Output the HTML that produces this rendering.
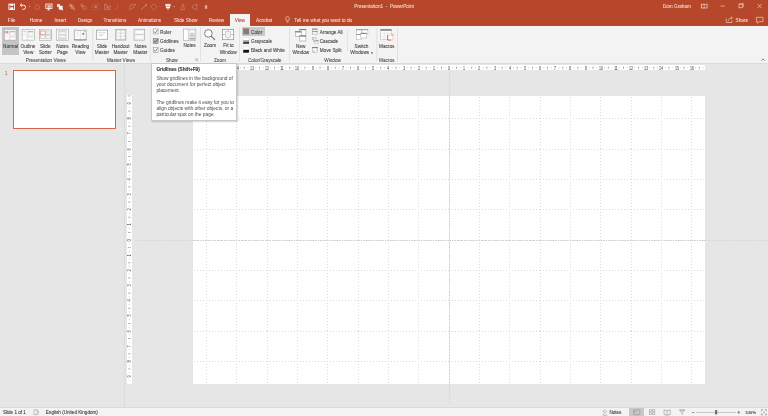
<!DOCTYPE html><html><head><meta charset="utf-8"><style>
html,body{margin:0;padding:0;width:768px;height:416px;overflow:hidden;background:#E6E6E6;font-family:"Liberation Sans",sans-serif}
.t{position:absolute;white-space:nowrap;line-height:1.16;-webkit-text-stroke-width:0.1px}
#w{position:absolute;left:0;top:0;width:768px;height:416px;will-change:transform;overflow:hidden}
.r{position:absolute}
svg{position:absolute;overflow:visible}
</style></head><body><div id="w"><div class="r" style="left:0px;top:0px;width:768px;height:25.6px;background:#B7472A;"></div><div class="r" style="left:229.8px;top:14px;width:20.7px;height:12px;background:#F3F3F3;"></div><div class="r" style="left:0px;top:25.6px;width:768px;height:37.4px;background:#F3F3F3;"></div><div class="r" style="left:0px;top:62.6px;width:768px;height:0.8px;background:#DCDCDC;"></div><div class="r" style="left:0px;top:407.5px;width:768px;height:8.5px;background:#F3F3F3;"></div><div class="r" style="left:0px;top:407px;width:768px;height:0.6px;background:#DADADA;"></div><div class="r" style="left:123.6px;top:63.4px;width:1.6px;height:344px;background:#DCDCDC;"></div><div class="t" style="left:354.2px;top:3.97px;font-size:4.7px;color:#F5DDD6;font-weight:normal;-webkit-text-stroke-width:0.05px">Presentation1&nbsp;&nbsp;-&nbsp;&nbsp;PowerPoint</div><div class="t" style="left:662.8px;top:4.17px;font-size:4.7px;color:#F5DDD6;font-weight:normal;-webkit-text-stroke-width:0.05px">Dom Graham</div><div class="t" style="left:7.8px;top:17.97px;font-size:4.7px;color:#F5DDD6;font-weight:normal;-webkit-text-stroke-width:0.05px">File</div><div class="t" style="left:29.8px;top:17.97px;font-size:4.7px;color:#F5DDD6;font-weight:normal;-webkit-text-stroke-width:0.05px">Home</div><div class="t" style="left:54.4px;top:17.97px;font-size:4.7px;color:#F5DDD6;font-weight:normal;-webkit-text-stroke-width:0.05px">Insert</div><div class="t" style="left:77.8px;top:17.97px;font-size:4.7px;color:#F5DDD6;font-weight:normal;-webkit-text-stroke-width:0.05px">Design</div><div class="t" style="left:103.5px;top:17.97px;font-size:4.7px;color:#F5DDD6;font-weight:normal;-webkit-text-stroke-width:0.05px">Transitions</div><div class="t" style="left:138px;top:17.97px;font-size:4.7px;color:#F5DDD6;font-weight:normal;-webkit-text-stroke-width:0.05px">Animations</div><div class="t" style="left:174px;top:17.97px;font-size:4.7px;color:#F5DDD6;font-weight:normal;-webkit-text-stroke-width:0.05px">Slide Show</div><div class="t" style="left:208.8px;top:17.97px;font-size:4.7px;color:#F5DDD6;font-weight:normal;-webkit-text-stroke-width:0.05px">Review</div><div class="t" style="left:256px;top:17.97px;font-size:4.7px;color:#F5DDD6;font-weight:normal;-webkit-text-stroke-width:0.05px">Acrobat</div><div class="t" style="left:294.3px;top:17.97px;font-size:4.7px;color:#F5DDD6;font-weight:normal;-webkit-text-stroke-width:0.05px">Tell me what you want to do</div><div class="t" style="left:735.5px;top:17.97px;font-size:4.7px;color:#F5DDD6;font-weight:normal;-webkit-text-stroke-width:0.05px">Share</div><div class="t" style="left:234.8px;top:17.97px;font-size:4.7px;color:#B7472A;font-weight:normal;-webkit-text-stroke-width:0.1px">View</div><div class="r" style="left:2px;top:27.4px;width:17.4px;height:27.3px;background:#C5C5C5;"></div><div class="r" style="left:242px;top:27.4px;width:22.7px;height:8.4px;background:#C9C9C9;"></div><div class="t" style="left:-39.4px;width:100px;text-align:center;top:43.97px;font-size:4.7px;color:#484848;">Normal</div><div class="t" style="left:-22px;width:100px;text-align:center;top:43.97px;font-size:4.7px;color:#484848;">Outline</div><div class="t" style="left:-21.7px;width:100px;text-align:center;top:50.17px;font-size:4.7px;color:#484848;">View</div><div class="t" style="left:-4.700000000000003px;width:100px;text-align:center;top:43.97px;font-size:4.7px;color:#484848;">Slide</div><div class="t" style="left:-4.700000000000003px;width:100px;text-align:center;top:50.17px;font-size:4.7px;color:#484848;">Sorter</div><div class="t" style="left:12.399999999999999px;width:100px;text-align:center;top:43.97px;font-size:4.7px;color:#484848;">Notes</div><div class="t" style="left:12.399999999999999px;width:100px;text-align:center;top:50.17px;font-size:4.7px;color:#484848;">Page</div><div class="t" style="left:30.400000000000006px;width:100px;text-align:center;top:43.97px;font-size:4.7px;color:#484848;">Reading</div><div class="t" style="left:30.400000000000006px;width:100px;text-align:center;top:50.17px;font-size:4.7px;color:#484848;">View</div><div class="t" style="left:52px;width:100px;text-align:center;top:43.97px;font-size:4.7px;color:#484848;">Slide</div><div class="t" style="left:52px;width:100px;text-align:center;top:50.17px;font-size:4.7px;color:#484848;">Master</div><div class="t" style="left:70.6px;width:100px;text-align:center;top:43.97px;font-size:4.7px;color:#484848;">Handout</div><div class="t" style="left:70.6px;width:100px;text-align:center;top:50.17px;font-size:4.7px;color:#484848;">Master</div><div class="t" style="left:90.5px;width:100px;text-align:center;top:43.97px;font-size:4.7px;color:#484848;">Notes</div><div class="t" style="left:90.5px;width:100px;text-align:center;top:50.17px;font-size:4.7px;color:#484848;">Master</div><div class="t" style="left:139.6px;width:100px;text-align:center;top:42.97px;font-size:4.7px;color:#484848;">Notes</div><div class="t" style="left:160.1px;width:100px;text-align:center;top:42.97px;font-size:4.7px;color:#484848;">Zoom</div><div class="t" style="left:178.5px;width:100px;text-align:center;top:42.97px;font-size:4.7px;color:#484848;">Fit to</div><div class="t" style="left:178.2px;width:100px;text-align:center;top:49.97px;font-size:4.7px;color:#484848;">Window</div><div class="t" style="left:250.8px;width:100px;text-align:center;top:43.97px;font-size:4.7px;color:#484848;">New</div><div class="t" style="left:250.8px;width:100px;text-align:center;top:49.97px;font-size:4.7px;color:#484848;">Window</div><div class="t" style="left:311.5px;width:100px;text-align:center;top:43.57px;font-size:4.7px;color:#484848;">Switch</div><div class="t" style="left:336.7px;width:100px;text-align:center;top:43.57px;font-size:4.7px;color:#484848;">Macros</div><div class="t" style="left:311.8px;width:100px;text-align:center;top:49.97px;font-size:4.7px;color:#484848;">Windows <span style="font-size:3px">▼</span></div><div class="t" style="left:-4.200000000000003px;width:100px;text-align:center;top:57.67px;font-size:4.7px;color:#555;">Presentation Views</div><div class="t" style="left:71px;width:100px;text-align:center;top:57.67px;font-size:4.7px;color:#555;">Master Views</div><div class="t" style="left:121.80000000000001px;width:100px;text-align:center;top:57.67px;font-size:4.7px;color:#555;">Show</div><div class="t" style="left:170px;width:100px;text-align:center;top:57.67px;font-size:4.7px;color:#555;">Zoom</div><div class="t" style="left:214.7px;width:100px;text-align:center;top:57.67px;font-size:4.7px;color:#555;">Color/Grayscale</div><div class="t" style="left:282.6px;width:100px;text-align:center;top:57.67px;font-size:4.7px;color:#555;">Window</div><div class="t" style="left:336.7px;width:100px;text-align:center;top:57.67px;font-size:4.7px;color:#555;">Macros</div><div class="t" style="left:160.1px;top:30.07px;font-size:4.7px;color:#484848;font-weight:normal;">Ruler</div><div class="t" style="left:160.1px;top:39.07px;font-size:4.7px;color:#484848;font-weight:normal;">Gridlines</div><div class="t" style="left:160.1px;top:48.17px;font-size:4.7px;color:#484848;font-weight:normal;">Guides</div><div class="t" style="left:251px;top:30.07px;font-size:4.7px;color:#484848;font-weight:normal;">Color</div><div class="t" style="left:251px;top:39.07px;font-size:4.7px;color:#484848;font-weight:normal;">Grayscale</div><div class="t" style="left:251px;top:48.47px;font-size:4.7px;color:#484848;font-weight:normal;">Black and White</div><div class="t" style="left:319.7px;top:29.97px;font-size:4.7px;color:#484848;font-weight:normal;">Arrange All</div><div class="t" style="left:319.7px;top:39.07px;font-size:4.7px;color:#484848;font-weight:normal;">Cascade</div><div class="t" style="left:319.7px;top:48.47px;font-size:4.7px;color:#484848;font-weight:normal;">Move Split</div><svg width="768" height="416" style="left:0;top:0" viewBox="0 0 768 416"><rect x="92.39999999999999" y="27.5" width="0.8" height="34" fill="#DCDCDC"/><rect x="149.79999999999998" y="27.5" width="0.8" height="34" fill="#DCDCDC"/><rect x="200.0" y="27.5" width="0.8" height="34" fill="#DCDCDC"/><rect x="239.2" y="27.5" width="0.8" height="34" fill="#DCDCDC"/><rect x="289.1" y="27.5" width="0.8" height="34" fill="#DCDCDC"/><rect x="376.5" y="27.5" width="0.8" height="34" fill="#DCDCDC"/><rect x="397.0" y="27.5" width="0.8" height="34" fill="#DCDCDC"/><rect x="347.3" y="29.5" width="0.8" height="22" fill="#DCDCDC"/></svg><div class="t" style="left:4.8px;top:70.96px;font-size:4.9px;color:#D0694E;font-weight:normal;-webkit-text-stroke-width:0.05px">1</div><div class="r" style="left:12.7px;top:69.7px;width:103.3px;height:59.4px;background:#FFFFFF;box-sizing:border-box;border:1.5px solid #D9664A"></div><div class="r" style="left:193px;top:95.6px;width:512px;height:288.2px;background:#FFFFFF;"></div><svg width="768" height="416" style="left:0;top:0" viewBox="0 0 768 416"><path d="M206.5 119V96M206.5 118V149M206.5 149V179M206.5 179V209M206.5 209V240M206.5 240V270M206.5 270V300M206.5 300V331M206.5 331V361M206.5 361V383.8M236.5 119V96M236.5 118V149M236.5 149V179M236.5 179V209M236.5 209V240M236.5 240V270M236.5 270V300M236.5 300V331M236.5 331V361M236.5 361V383.8M267.5 119V96M267.5 118V149M267.5 149V179M267.5 179V209M267.5 209V240M267.5 240V270M267.5 270V300M267.5 300V331M267.5 331V361M267.5 361V383.8M297.5 119V96M297.5 118V149M297.5 149V179M297.5 179V209M297.5 209V240M297.5 240V270M297.5 270V300M297.5 300V331M297.5 331V361M297.5 361V383.8M327.5 119V96M327.5 118V149M327.5 149V179M327.5 179V209M327.5 209V240M327.5 240V270M327.5 270V300M327.5 300V331M327.5 331V361M327.5 361V383.8M358.5 119V96M358.5 118V149M358.5 149V179M358.5 179V209M358.5 209V240M358.5 240V270M358.5 270V300M358.5 300V331M358.5 331V361M358.5 361V383.8M388.5 119V96M388.5 118V149M388.5 149V179M388.5 179V209M388.5 209V240M388.5 240V270M388.5 270V300M388.5 300V331M388.5 331V361M388.5 361V383.8M418.5 119V96M418.5 118V149M418.5 149V179M418.5 179V209M418.5 209V240M418.5 240V270M418.5 270V300M418.5 300V331M418.5 331V361M418.5 361V383.8M449.5 119V96M449.5 118V149M449.5 149V179M449.5 179V209M449.5 209V240M449.5 240V270M449.5 270V300M449.5 300V331M449.5 331V361M449.5 361V383.8M479.5 119V96M479.5 118V149M479.5 149V179M479.5 179V209M479.5 209V240M479.5 240V270M479.5 270V300M479.5 300V331M479.5 331V361M479.5 361V383.8M509.5 119V96M509.5 118V149M509.5 149V179M509.5 179V209M509.5 209V240M509.5 240V270M509.5 270V300M509.5 300V331M509.5 331V361M509.5 361V383.8M540.5 119V96M540.5 118V149M540.5 149V179M540.5 179V209M540.5 209V240M540.5 240V270M540.5 270V300M540.5 300V331M540.5 331V361M540.5 361V383.8M570.5 119V96M570.5 118V149M570.5 149V179M570.5 179V209M570.5 209V240M570.5 240V270M570.5 270V300M570.5 300V331M570.5 331V361M570.5 361V383.8M600.5 119V96M600.5 118V149M600.5 149V179M600.5 179V209M600.5 209V240M600.5 240V270M600.5 270V300M600.5 300V331M600.5 331V361M600.5 361V383.8M631.5 119V96M631.5 118V149M631.5 149V179M631.5 179V209M631.5 209V240M631.5 240V270M631.5 270V300M631.5 300V331M631.5 331V361M631.5 361V383.8M661.5 119V96M661.5 118V149M661.5 149V179M661.5 179V209M661.5 209V240M661.5 240V270M661.5 270V300M661.5 300V331M661.5 331V361M661.5 361V383.8M691.5 119V96M691.5 118V149M691.5 149V179M691.5 179V209M691.5 209V240M691.5 240V270M691.5 270V300M691.5 300V331M691.5 331V361M691.5 361V383.8M207 118.5H193M206 118.5H236M236 118.5H267M267 118.5H297M297 118.5H327M327 118.5H358M358 118.5H388M388 118.5H418M418 118.5H449M449 118.5H479M479 118.5H509M509 118.5H540M540 118.5H570M570 118.5H600M600 118.5H631M631 118.5H661M661 118.5H691M691 118.5H705M207 149.5H193M206 149.5H236M236 149.5H267M267 149.5H297M297 149.5H327M327 149.5H358M358 149.5H388M388 149.5H418M418 149.5H449M449 149.5H479M479 149.5H509M509 149.5H540M540 149.5H570M570 149.5H600M600 149.5H631M631 149.5H661M661 149.5H691M691 149.5H705M207 179.5H193M206 179.5H236M236 179.5H267M267 179.5H297M297 179.5H327M327 179.5H358M358 179.5H388M388 179.5H418M418 179.5H449M449 179.5H479M479 179.5H509M509 179.5H540M540 179.5H570M570 179.5H600M600 179.5H631M631 179.5H661M661 179.5H691M691 179.5H705M207 209.5H193M206 209.5H236M236 209.5H267M267 209.5H297M297 209.5H327M327 209.5H358M358 209.5H388M388 209.5H418M418 209.5H449M449 209.5H479M479 209.5H509M509 209.5H540M540 209.5H570M570 209.5H600M600 209.5H631M631 209.5H661M661 209.5H691M691 209.5H705M207 240.5H193M206 240.5H236M236 240.5H267M267 240.5H297M297 240.5H327M327 240.5H358M358 240.5H388M388 240.5H418M418 240.5H449M449 240.5H479M479 240.5H509M509 240.5H540M540 240.5H570M570 240.5H600M600 240.5H631M631 240.5H661M661 240.5H691M691 240.5H705M207 270.5H193M206 270.5H236M236 270.5H267M267 270.5H297M297 270.5H327M327 270.5H358M358 270.5H388M388 270.5H418M418 270.5H449M449 270.5H479M479 270.5H509M509 270.5H540M540 270.5H570M570 270.5H600M600 270.5H631M631 270.5H661M661 270.5H691M691 270.5H705M207 300.5H193M206 300.5H236M236 300.5H267M267 300.5H297M297 300.5H327M327 300.5H358M358 300.5H388M388 300.5H418M418 300.5H449M449 300.5H479M479 300.5H509M509 300.5H540M540 300.5H570M570 300.5H600M600 300.5H631M631 300.5H661M661 300.5H691M691 300.5H705M207 331.5H193M206 331.5H236M236 331.5H267M267 331.5H297M297 331.5H327M327 331.5H358M358 331.5H388M388 331.5H418M418 331.5H449M449 331.5H479M479 331.5H509M509 331.5H540M540 331.5H570M570 331.5H600M600 331.5H631M631 331.5H661M661 331.5H691M691 331.5H705M207 361.5H193M206 361.5H236M236 361.5H267M267 361.5H297M297 361.5H327M327 361.5H358M358 361.5H388M388 361.5H418M418 361.5H449M449 361.5H479M479 361.5H509M509 361.5H540M540 361.5H570M570 361.5H600M600 361.5H631M631 361.5H661M661 361.5H691M691 361.5H705" stroke="#DCDCDC" stroke-width="1" stroke-dasharray="1 2" fill="none"/><line x1="449.5" y1="72" x2="449.5" y2="95.6" stroke="#D4D4D4" stroke-width="1" stroke-dasharray="1.2 1.2"/><line x1="449.5" y1="95.6" x2="449.5" y2="384" stroke="#C8C8C8" stroke-width="1" stroke-dasharray="1.2 1.2"/><line x1="449.5" y1="384" x2="449.5" y2="405.5" stroke="#D4D4D4" stroke-width="1" stroke-dasharray="1.2 1.2"/><line x1="135" y1="240.5" x2="193" y2="240.5" stroke="#D4D4D4" stroke-width="1" stroke-dasharray="1.2 1.2"/><line x1="193" y1="240.5" x2="705" y2="240.5" stroke="#C8C8C8" stroke-width="1" stroke-dasharray="1.2 1.2"/><line x1="705" y1="240.5" x2="768" y2="240.5" stroke="#D4D4D4" stroke-width="1" stroke-dasharray="1.2 1.2"/></svg><div class="r" style="left:160px;top:65.1px;width:545px;height:5.4px;background:#FFFFFF;"></div><svg width="768" height="416" style="left:0;top:0" viewBox="0 0 768 416"><rect x="164.17" y="67.3" width="0.9" height="0.9" fill="#BDBDBD"/><rect x="167.97" y="66.5" width="0.9" height="2.4" fill="#A5A5A5"/><rect x="171.76" y="67.3" width="0.9" height="0.9" fill="#BDBDBD"/><rect x="179.34" y="67.3" width="0.9" height="0.9" fill="#BDBDBD"/><rect x="183.13" y="66.5" width="0.9" height="2.4" fill="#A5A5A5"/><rect x="186.92" y="67.3" width="0.9" height="0.9" fill="#BDBDBD"/><rect x="194.51" y="67.3" width="0.9" height="0.9" fill="#BDBDBD"/><rect x="198.30" y="66.5" width="0.9" height="2.4" fill="#A5A5A5"/><rect x="202.09" y="67.3" width="0.9" height="0.9" fill="#BDBDBD"/><rect x="209.67" y="67.3" width="0.9" height="0.9" fill="#BDBDBD"/><rect x="213.47" y="66.5" width="0.9" height="2.4" fill="#A5A5A5"/><rect x="217.26" y="67.3" width="0.9" height="0.9" fill="#BDBDBD"/><rect x="224.84" y="67.3" width="0.9" height="0.9" fill="#BDBDBD"/><rect x="228.63" y="66.5" width="0.9" height="2.4" fill="#A5A5A5"/><rect x="232.42" y="67.3" width="0.9" height="0.9" fill="#BDBDBD"/><rect x="240.01" y="67.3" width="0.9" height="0.9" fill="#BDBDBD"/><rect x="243.80" y="66.5" width="0.9" height="2.4" fill="#A5A5A5"/><rect x="247.59" y="67.3" width="0.9" height="0.9" fill="#BDBDBD"/><rect x="255.17" y="67.3" width="0.9" height="0.9" fill="#BDBDBD"/><rect x="258.97" y="66.5" width="0.9" height="2.4" fill="#A5A5A5"/><rect x="262.76" y="67.3" width="0.9" height="0.9" fill="#BDBDBD"/><rect x="270.34" y="67.3" width="0.9" height="0.9" fill="#BDBDBD"/><rect x="274.13" y="66.5" width="0.9" height="2.4" fill="#A5A5A5"/><rect x="277.92" y="67.3" width="0.9" height="0.9" fill="#BDBDBD"/><rect x="285.51" y="67.3" width="0.9" height="0.9" fill="#BDBDBD"/><rect x="289.30" y="66.5" width="0.9" height="2.4" fill="#A5A5A5"/><rect x="293.09" y="67.3" width="0.9" height="0.9" fill="#BDBDBD"/><rect x="300.67" y="67.3" width="0.9" height="0.9" fill="#BDBDBD"/><rect x="304.47" y="66.5" width="0.9" height="2.4" fill="#A5A5A5"/><rect x="308.26" y="67.3" width="0.9" height="0.9" fill="#BDBDBD"/><rect x="315.84" y="67.3" width="0.9" height="0.9" fill="#BDBDBD"/><rect x="319.63" y="66.5" width="0.9" height="2.4" fill="#A5A5A5"/><rect x="323.42" y="67.3" width="0.9" height="0.9" fill="#BDBDBD"/><rect x="331.01" y="67.3" width="0.9" height="0.9" fill="#BDBDBD"/><rect x="334.80" y="66.5" width="0.9" height="2.4" fill="#A5A5A5"/><rect x="338.59" y="67.3" width="0.9" height="0.9" fill="#BDBDBD"/><rect x="346.17" y="67.3" width="0.9" height="0.9" fill="#BDBDBD"/><rect x="349.97" y="66.5" width="0.9" height="2.4" fill="#A5A5A5"/><rect x="353.76" y="67.3" width="0.9" height="0.9" fill="#BDBDBD"/><rect x="361.34" y="67.3" width="0.9" height="0.9" fill="#BDBDBD"/><rect x="365.13" y="66.5" width="0.9" height="2.4" fill="#A5A5A5"/><rect x="368.92" y="67.3" width="0.9" height="0.9" fill="#BDBDBD"/><rect x="376.51" y="67.3" width="0.9" height="0.9" fill="#BDBDBD"/><rect x="380.30" y="66.5" width="0.9" height="2.4" fill="#A5A5A5"/><rect x="384.09" y="67.3" width="0.9" height="0.9" fill="#BDBDBD"/><rect x="391.67" y="67.3" width="0.9" height="0.9" fill="#BDBDBD"/><rect x="395.47" y="66.5" width="0.9" height="2.4" fill="#A5A5A5"/><rect x="399.26" y="67.3" width="0.9" height="0.9" fill="#BDBDBD"/><rect x="406.84" y="67.3" width="0.9" height="0.9" fill="#BDBDBD"/><rect x="410.63" y="66.5" width="0.9" height="2.4" fill="#A5A5A5"/><rect x="414.42" y="67.3" width="0.9" height="0.9" fill="#BDBDBD"/><rect x="422.01" y="67.3" width="0.9" height="0.9" fill="#BDBDBD"/><rect x="425.80" y="66.5" width="0.9" height="2.4" fill="#A5A5A5"/><rect x="429.59" y="67.3" width="0.9" height="0.9" fill="#BDBDBD"/><rect x="437.17" y="67.3" width="0.9" height="0.9" fill="#BDBDBD"/><rect x="440.97" y="66.5" width="0.9" height="2.4" fill="#A5A5A5"/><rect x="444.76" y="67.3" width="0.9" height="0.9" fill="#BDBDBD"/><rect x="452.34" y="67.3" width="0.9" height="0.9" fill="#BDBDBD"/><rect x="456.13" y="66.5" width="0.9" height="2.4" fill="#A5A5A5"/><rect x="459.93" y="67.3" width="0.9" height="0.9" fill="#BDBDBD"/><rect x="467.51" y="67.3" width="0.9" height="0.9" fill="#BDBDBD"/><rect x="471.30" y="66.5" width="0.9" height="2.4" fill="#A5A5A5"/><rect x="475.09" y="67.3" width="0.9" height="0.9" fill="#BDBDBD"/><rect x="482.68" y="67.3" width="0.9" height="0.9" fill="#BDBDBD"/><rect x="486.47" y="66.5" width="0.9" height="2.4" fill="#A5A5A5"/><rect x="490.26" y="67.3" width="0.9" height="0.9" fill="#BDBDBD"/><rect x="497.84" y="67.3" width="0.9" height="0.9" fill="#BDBDBD"/><rect x="501.63" y="66.5" width="0.9" height="2.4" fill="#A5A5A5"/><rect x="505.43" y="67.3" width="0.9" height="0.9" fill="#BDBDBD"/><rect x="513.01" y="67.3" width="0.9" height="0.9" fill="#BDBDBD"/><rect x="516.80" y="66.5" width="0.9" height="2.4" fill="#A5A5A5"/><rect x="520.59" y="67.3" width="0.9" height="0.9" fill="#BDBDBD"/><rect x="528.18" y="67.3" width="0.9" height="0.9" fill="#BDBDBD"/><rect x="531.97" y="66.5" width="0.9" height="2.4" fill="#A5A5A5"/><rect x="535.76" y="67.3" width="0.9" height="0.9" fill="#BDBDBD"/><rect x="543.34" y="67.3" width="0.9" height="0.9" fill="#BDBDBD"/><rect x="547.13" y="66.5" width="0.9" height="2.4" fill="#A5A5A5"/><rect x="550.93" y="67.3" width="0.9" height="0.9" fill="#BDBDBD"/><rect x="558.51" y="67.3" width="0.9" height="0.9" fill="#BDBDBD"/><rect x="562.30" y="66.5" width="0.9" height="2.4" fill="#A5A5A5"/><rect x="566.09" y="67.3" width="0.9" height="0.9" fill="#BDBDBD"/><rect x="573.68" y="67.3" width="0.9" height="0.9" fill="#BDBDBD"/><rect x="577.47" y="66.5" width="0.9" height="2.4" fill="#A5A5A5"/><rect x="581.26" y="67.3" width="0.9" height="0.9" fill="#BDBDBD"/><rect x="588.84" y="67.3" width="0.9" height="0.9" fill="#BDBDBD"/><rect x="592.63" y="66.5" width="0.9" height="2.4" fill="#A5A5A5"/><rect x="596.43" y="67.3" width="0.9" height="0.9" fill="#BDBDBD"/><rect x="604.01" y="67.3" width="0.9" height="0.9" fill="#BDBDBD"/><rect x="607.80" y="66.5" width="0.9" height="2.4" fill="#A5A5A5"/><rect x="611.59" y="67.3" width="0.9" height="0.9" fill="#BDBDBD"/><rect x="619.18" y="67.3" width="0.9" height="0.9" fill="#BDBDBD"/><rect x="622.97" y="66.5" width="0.9" height="2.4" fill="#A5A5A5"/><rect x="626.76" y="67.3" width="0.9" height="0.9" fill="#BDBDBD"/><rect x="634.34" y="67.3" width="0.9" height="0.9" fill="#BDBDBD"/><rect x="638.13" y="66.5" width="0.9" height="2.4" fill="#A5A5A5"/><rect x="641.93" y="67.3" width="0.9" height="0.9" fill="#BDBDBD"/><rect x="649.51" y="67.3" width="0.9" height="0.9" fill="#BDBDBD"/><rect x="653.30" y="66.5" width="0.9" height="2.4" fill="#A5A5A5"/><rect x="657.09" y="67.3" width="0.9" height="0.9" fill="#BDBDBD"/><rect x="664.68" y="67.3" width="0.9" height="0.9" fill="#BDBDBD"/><rect x="668.47" y="66.5" width="0.9" height="2.4" fill="#A5A5A5"/><rect x="672.26" y="67.3" width="0.9" height="0.9" fill="#BDBDBD"/><rect x="679.84" y="67.3" width="0.9" height="0.9" fill="#BDBDBD"/><rect x="683.63" y="66.5" width="0.9" height="2.4" fill="#A5A5A5"/><rect x="687.43" y="67.3" width="0.9" height="0.9" fill="#BDBDBD"/><rect x="695.01" y="67.3" width="0.9" height="0.9" fill="#BDBDBD"/><rect x="698.80" y="66.5" width="0.9" height="2.4" fill="#A5A5A5"/><rect x="702.59" y="67.3" width="0.9" height="0.9" fill="#BDBDBD"/></svg><div class="t" style="left:140.83px;top:65.7px;width:40px;height:5px;line-height:5px;text-align:center;font-size:5px;color:#555;letter-spacing:-0.1px;-webkit-text-stroke-width:0.05px;transform:scaleX(0.72)">19</div><div class="t" style="left:156.00px;top:65.7px;width:40px;height:5px;line-height:5px;text-align:center;font-size:5px;color:#555;letter-spacing:-0.1px;-webkit-text-stroke-width:0.05px;transform:scaleX(0.72)">18</div><div class="t" style="left:171.17px;top:65.7px;width:40px;height:5px;line-height:5px;text-align:center;font-size:5px;color:#555;letter-spacing:-0.1px;-webkit-text-stroke-width:0.05px;transform:scaleX(0.72)">17</div><div class="t" style="left:186.33px;top:65.7px;width:40px;height:5px;line-height:5px;text-align:center;font-size:5px;color:#555;letter-spacing:-0.1px;-webkit-text-stroke-width:0.05px;transform:scaleX(0.72)">16</div><div class="t" style="left:201.50px;top:65.7px;width:40px;height:5px;line-height:5px;text-align:center;font-size:5px;color:#555;letter-spacing:-0.1px;-webkit-text-stroke-width:0.05px;transform:scaleX(0.72)">15</div><div class="t" style="left:216.67px;top:65.7px;width:40px;height:5px;line-height:5px;text-align:center;font-size:5px;color:#555;letter-spacing:-0.1px;-webkit-text-stroke-width:0.05px;transform:scaleX(0.72)">14</div><div class="t" style="left:231.83px;top:65.7px;width:40px;height:5px;line-height:5px;text-align:center;font-size:5px;color:#555;letter-spacing:-0.1px;-webkit-text-stroke-width:0.05px;transform:scaleX(0.72)">13</div><div class="t" style="left:247.00px;top:65.7px;width:40px;height:5px;line-height:5px;text-align:center;font-size:5px;color:#555;letter-spacing:-0.1px;-webkit-text-stroke-width:0.05px;transform:scaleX(0.72)">12</div><div class="t" style="left:262.17px;top:65.7px;width:40px;height:5px;line-height:5px;text-align:center;font-size:5px;color:#555;letter-spacing:-0.1px;-webkit-text-stroke-width:0.05px;transform:scaleX(0.72)">11</div><div class="t" style="left:277.33px;top:65.7px;width:40px;height:5px;line-height:5px;text-align:center;font-size:5px;color:#555;letter-spacing:-0.1px;-webkit-text-stroke-width:0.05px;transform:scaleX(0.72)">10</div><div class="t" style="left:292.50px;top:65.7px;width:40px;height:5px;line-height:5px;text-align:center;font-size:5px;color:#555;letter-spacing:-0.1px;-webkit-text-stroke-width:0.05px;transform:scaleX(0.72)">9</div><div class="t" style="left:307.67px;top:65.7px;width:40px;height:5px;line-height:5px;text-align:center;font-size:5px;color:#555;letter-spacing:-0.1px;-webkit-text-stroke-width:0.05px;transform:scaleX(0.72)">8</div><div class="t" style="left:322.83px;top:65.7px;width:40px;height:5px;line-height:5px;text-align:center;font-size:5px;color:#555;letter-spacing:-0.1px;-webkit-text-stroke-width:0.05px;transform:scaleX(0.72)">7</div><div class="t" style="left:338.00px;top:65.7px;width:40px;height:5px;line-height:5px;text-align:center;font-size:5px;color:#555;letter-spacing:-0.1px;-webkit-text-stroke-width:0.05px;transform:scaleX(0.72)">6</div><div class="t" style="left:353.17px;top:65.7px;width:40px;height:5px;line-height:5px;text-align:center;font-size:5px;color:#555;letter-spacing:-0.1px;-webkit-text-stroke-width:0.05px;transform:scaleX(0.72)">5</div><div class="t" style="left:368.33px;top:65.7px;width:40px;height:5px;line-height:5px;text-align:center;font-size:5px;color:#555;letter-spacing:-0.1px;-webkit-text-stroke-width:0.05px;transform:scaleX(0.72)">4</div><div class="t" style="left:383.50px;top:65.7px;width:40px;height:5px;line-height:5px;text-align:center;font-size:5px;color:#555;letter-spacing:-0.1px;-webkit-text-stroke-width:0.05px;transform:scaleX(0.72)">3</div><div class="t" style="left:398.67px;top:65.7px;width:40px;height:5px;line-height:5px;text-align:center;font-size:5px;color:#555;letter-spacing:-0.1px;-webkit-text-stroke-width:0.05px;transform:scaleX(0.72)">2</div><div class="t" style="left:413.83px;top:65.7px;width:40px;height:5px;line-height:5px;text-align:center;font-size:5px;color:#555;letter-spacing:-0.1px;-webkit-text-stroke-width:0.05px;transform:scaleX(0.72)">1</div><div class="t" style="left:429.00px;top:65.7px;width:40px;height:5px;line-height:5px;text-align:center;font-size:5px;color:#555;letter-spacing:-0.1px;-webkit-text-stroke-width:0.05px;transform:scaleX(0.72)">0</div><div class="t" style="left:444.17px;top:65.7px;width:40px;height:5px;line-height:5px;text-align:center;font-size:5px;color:#555;letter-spacing:-0.1px;-webkit-text-stroke-width:0.05px;transform:scaleX(0.72)">1</div><div class="t" style="left:459.33px;top:65.7px;width:40px;height:5px;line-height:5px;text-align:center;font-size:5px;color:#555;letter-spacing:-0.1px;-webkit-text-stroke-width:0.05px;transform:scaleX(0.72)">2</div><div class="t" style="left:474.50px;top:65.7px;width:40px;height:5px;line-height:5px;text-align:center;font-size:5px;color:#555;letter-spacing:-0.1px;-webkit-text-stroke-width:0.05px;transform:scaleX(0.72)">3</div><div class="t" style="left:489.67px;top:65.7px;width:40px;height:5px;line-height:5px;text-align:center;font-size:5px;color:#555;letter-spacing:-0.1px;-webkit-text-stroke-width:0.05px;transform:scaleX(0.72)">4</div><div class="t" style="left:504.83px;top:65.7px;width:40px;height:5px;line-height:5px;text-align:center;font-size:5px;color:#555;letter-spacing:-0.1px;-webkit-text-stroke-width:0.05px;transform:scaleX(0.72)">5</div><div class="t" style="left:520.00px;top:65.7px;width:40px;height:5px;line-height:5px;text-align:center;font-size:5px;color:#555;letter-spacing:-0.1px;-webkit-text-stroke-width:0.05px;transform:scaleX(0.72)">6</div><div class="t" style="left:535.17px;top:65.7px;width:40px;height:5px;line-height:5px;text-align:center;font-size:5px;color:#555;letter-spacing:-0.1px;-webkit-text-stroke-width:0.05px;transform:scaleX(0.72)">7</div><div class="t" style="left:550.33px;top:65.7px;width:40px;height:5px;line-height:5px;text-align:center;font-size:5px;color:#555;letter-spacing:-0.1px;-webkit-text-stroke-width:0.05px;transform:scaleX(0.72)">8</div><div class="t" style="left:565.50px;top:65.7px;width:40px;height:5px;line-height:5px;text-align:center;font-size:5px;color:#555;letter-spacing:-0.1px;-webkit-text-stroke-width:0.05px;transform:scaleX(0.72)">9</div><div class="t" style="left:580.67px;top:65.7px;width:40px;height:5px;line-height:5px;text-align:center;font-size:5px;color:#555;letter-spacing:-0.1px;-webkit-text-stroke-width:0.05px;transform:scaleX(0.72)">10</div><div class="t" style="left:595.83px;top:65.7px;width:40px;height:5px;line-height:5px;text-align:center;font-size:5px;color:#555;letter-spacing:-0.1px;-webkit-text-stroke-width:0.05px;transform:scaleX(0.72)">11</div><div class="t" style="left:611.00px;top:65.7px;width:40px;height:5px;line-height:5px;text-align:center;font-size:5px;color:#555;letter-spacing:-0.1px;-webkit-text-stroke-width:0.05px;transform:scaleX(0.72)">12</div><div class="t" style="left:626.17px;top:65.7px;width:40px;height:5px;line-height:5px;text-align:center;font-size:5px;color:#555;letter-spacing:-0.1px;-webkit-text-stroke-width:0.05px;transform:scaleX(0.72)">13</div><div class="t" style="left:641.33px;top:65.7px;width:40px;height:5px;line-height:5px;text-align:center;font-size:5px;color:#555;letter-spacing:-0.1px;-webkit-text-stroke-width:0.05px;transform:scaleX(0.72)">14</div><div class="t" style="left:656.50px;top:65.7px;width:40px;height:5px;line-height:5px;text-align:center;font-size:5px;color:#555;letter-spacing:-0.1px;-webkit-text-stroke-width:0.05px;transform:scaleX(0.72)">15</div><div class="t" style="left:671.67px;top:65.7px;width:40px;height:5px;line-height:5px;text-align:center;font-size:5px;color:#555;letter-spacing:-0.1px;-webkit-text-stroke-width:0.05px;transform:scaleX(0.72)">16</div><div class="r" style="left:126.8px;top:95.4px;width:5.4px;height:288.6px;background:#FFFFFF;"></div><svg width="768" height="416" style="left:0;top:0" viewBox="0 0 768 416"><rect x="128.1" y="95.47" width="2.4" height="0.9" fill="#A5A5A5"/><rect x="128.9" y="99.26" width="0.9" height="0.9" fill="#BDBDBD"/><rect x="128.9" y="106.84" width="0.9" height="0.9" fill="#BDBDBD"/><rect x="128.1" y="110.63" width="2.4" height="0.9" fill="#A5A5A5"/><rect x="128.9" y="114.42" width="0.9" height="0.9" fill="#BDBDBD"/><rect x="128.9" y="122.01" width="0.9" height="0.9" fill="#BDBDBD"/><rect x="128.1" y="125.80" width="2.4" height="0.9" fill="#A5A5A5"/><rect x="128.9" y="129.59" width="0.9" height="0.9" fill="#BDBDBD"/><rect x="128.9" y="137.17" width="0.9" height="0.9" fill="#BDBDBD"/><rect x="128.1" y="140.97" width="2.4" height="0.9" fill="#A5A5A5"/><rect x="128.9" y="144.76" width="0.9" height="0.9" fill="#BDBDBD"/><rect x="128.9" y="152.34" width="0.9" height="0.9" fill="#BDBDBD"/><rect x="128.1" y="156.13" width="2.4" height="0.9" fill="#A5A5A5"/><rect x="128.9" y="159.92" width="0.9" height="0.9" fill="#BDBDBD"/><rect x="128.9" y="167.51" width="0.9" height="0.9" fill="#BDBDBD"/><rect x="128.1" y="171.30" width="2.4" height="0.9" fill="#A5A5A5"/><rect x="128.9" y="175.09" width="0.9" height="0.9" fill="#BDBDBD"/><rect x="128.9" y="182.67" width="0.9" height="0.9" fill="#BDBDBD"/><rect x="128.1" y="186.47" width="2.4" height="0.9" fill="#A5A5A5"/><rect x="128.9" y="190.26" width="0.9" height="0.9" fill="#BDBDBD"/><rect x="128.9" y="197.84" width="0.9" height="0.9" fill="#BDBDBD"/><rect x="128.1" y="201.63" width="2.4" height="0.9" fill="#A5A5A5"/><rect x="128.9" y="205.42" width="0.9" height="0.9" fill="#BDBDBD"/><rect x="128.9" y="213.01" width="0.9" height="0.9" fill="#BDBDBD"/><rect x="128.1" y="216.80" width="2.4" height="0.9" fill="#A5A5A5"/><rect x="128.9" y="220.59" width="0.9" height="0.9" fill="#BDBDBD"/><rect x="128.9" y="228.17" width="0.9" height="0.9" fill="#BDBDBD"/><rect x="128.1" y="231.97" width="2.4" height="0.9" fill="#A5A5A5"/><rect x="128.9" y="235.76" width="0.9" height="0.9" fill="#BDBDBD"/><rect x="128.9" y="243.34" width="0.9" height="0.9" fill="#BDBDBD"/><rect x="128.1" y="247.13" width="2.4" height="0.9" fill="#A5A5A5"/><rect x="128.9" y="250.93" width="0.9" height="0.9" fill="#BDBDBD"/><rect x="128.9" y="258.51" width="0.9" height="0.9" fill="#BDBDBD"/><rect x="128.1" y="262.30" width="2.4" height="0.9" fill="#A5A5A5"/><rect x="128.9" y="266.09" width="0.9" height="0.9" fill="#BDBDBD"/><rect x="128.9" y="273.68" width="0.9" height="0.9" fill="#BDBDBD"/><rect x="128.1" y="277.47" width="2.4" height="0.9" fill="#A5A5A5"/><rect x="128.9" y="281.26" width="0.9" height="0.9" fill="#BDBDBD"/><rect x="128.9" y="288.84" width="0.9" height="0.9" fill="#BDBDBD"/><rect x="128.1" y="292.63" width="2.4" height="0.9" fill="#A5A5A5"/><rect x="128.9" y="296.43" width="0.9" height="0.9" fill="#BDBDBD"/><rect x="128.9" y="304.01" width="0.9" height="0.9" fill="#BDBDBD"/><rect x="128.1" y="307.80" width="2.4" height="0.9" fill="#A5A5A5"/><rect x="128.9" y="311.59" width="0.9" height="0.9" fill="#BDBDBD"/><rect x="128.9" y="319.18" width="0.9" height="0.9" fill="#BDBDBD"/><rect x="128.1" y="322.97" width="2.4" height="0.9" fill="#A5A5A5"/><rect x="128.9" y="326.76" width="0.9" height="0.9" fill="#BDBDBD"/><rect x="128.9" y="334.34" width="0.9" height="0.9" fill="#BDBDBD"/><rect x="128.1" y="338.13" width="2.4" height="0.9" fill="#A5A5A5"/><rect x="128.9" y="341.93" width="0.9" height="0.9" fill="#BDBDBD"/><rect x="128.9" y="349.51" width="0.9" height="0.9" fill="#BDBDBD"/><rect x="128.1" y="353.30" width="2.4" height="0.9" fill="#A5A5A5"/><rect x="128.9" y="357.09" width="0.9" height="0.9" fill="#BDBDBD"/><rect x="128.9" y="364.68" width="0.9" height="0.9" fill="#BDBDBD"/><rect x="128.1" y="368.47" width="2.4" height="0.9" fill="#A5A5A5"/><rect x="128.9" y="372.26" width="0.9" height="0.9" fill="#BDBDBD"/><rect x="128.9" y="379.84" width="0.9" height="0.9" fill="#BDBDBD"/></svg><div class="t" style="left:109.4px;top:101.00px;width:40px;height:5px;line-height:5px;text-align:center;font-size:4.8px;color:#5A5A5A;letter-spacing:-0.1px;-webkit-text-stroke-width:0.05px;transform:rotate(-90deg) scaleX(0.85)">9</div><div class="t" style="left:109.4px;top:116.17px;width:40px;height:5px;line-height:5px;text-align:center;font-size:4.8px;color:#5A5A5A;letter-spacing:-0.1px;-webkit-text-stroke-width:0.05px;transform:rotate(-90deg) scaleX(0.85)">8</div><div class="t" style="left:109.4px;top:131.33px;width:40px;height:5px;line-height:5px;text-align:center;font-size:4.8px;color:#5A5A5A;letter-spacing:-0.1px;-webkit-text-stroke-width:0.05px;transform:rotate(-90deg) scaleX(0.85)">7</div><div class="t" style="left:109.4px;top:146.50px;width:40px;height:5px;line-height:5px;text-align:center;font-size:4.8px;color:#5A5A5A;letter-spacing:-0.1px;-webkit-text-stroke-width:0.05px;transform:rotate(-90deg) scaleX(0.85)">6</div><div class="t" style="left:109.4px;top:161.67px;width:40px;height:5px;line-height:5px;text-align:center;font-size:4.8px;color:#5A5A5A;letter-spacing:-0.1px;-webkit-text-stroke-width:0.05px;transform:rotate(-90deg) scaleX(0.85)">5</div><div class="t" style="left:109.4px;top:176.83px;width:40px;height:5px;line-height:5px;text-align:center;font-size:4.8px;color:#5A5A5A;letter-spacing:-0.1px;-webkit-text-stroke-width:0.05px;transform:rotate(-90deg) scaleX(0.85)">4</div><div class="t" style="left:109.4px;top:192.00px;width:40px;height:5px;line-height:5px;text-align:center;font-size:4.8px;color:#5A5A5A;letter-spacing:-0.1px;-webkit-text-stroke-width:0.05px;transform:rotate(-90deg) scaleX(0.85)">3</div><div class="t" style="left:109.4px;top:207.17px;width:40px;height:5px;line-height:5px;text-align:center;font-size:4.8px;color:#5A5A5A;letter-spacing:-0.1px;-webkit-text-stroke-width:0.05px;transform:rotate(-90deg) scaleX(0.85)">2</div><div class="t" style="left:109.4px;top:222.33px;width:40px;height:5px;line-height:5px;text-align:center;font-size:4.8px;color:#5A5A5A;letter-spacing:-0.1px;-webkit-text-stroke-width:0.05px;transform:rotate(-90deg) scaleX(0.85)">1</div><div class="t" style="left:109.4px;top:237.50px;width:40px;height:5px;line-height:5px;text-align:center;font-size:4.8px;color:#5A5A5A;letter-spacing:-0.1px;-webkit-text-stroke-width:0.05px;transform:rotate(-90deg) scaleX(0.85)">0</div><div class="t" style="left:109.4px;top:252.67px;width:40px;height:5px;line-height:5px;text-align:center;font-size:4.8px;color:#5A5A5A;letter-spacing:-0.1px;-webkit-text-stroke-width:0.05px;transform:rotate(-90deg) scaleX(0.85)">1</div><div class="t" style="left:109.4px;top:267.83px;width:40px;height:5px;line-height:5px;text-align:center;font-size:4.8px;color:#5A5A5A;letter-spacing:-0.1px;-webkit-text-stroke-width:0.05px;transform:rotate(-90deg) scaleX(0.85)">2</div><div class="t" style="left:109.4px;top:283.00px;width:40px;height:5px;line-height:5px;text-align:center;font-size:4.8px;color:#5A5A5A;letter-spacing:-0.1px;-webkit-text-stroke-width:0.05px;transform:rotate(-90deg) scaleX(0.85)">3</div><div class="t" style="left:109.4px;top:298.17px;width:40px;height:5px;line-height:5px;text-align:center;font-size:4.8px;color:#5A5A5A;letter-spacing:-0.1px;-webkit-text-stroke-width:0.05px;transform:rotate(-90deg) scaleX(0.85)">4</div><div class="t" style="left:109.4px;top:313.33px;width:40px;height:5px;line-height:5px;text-align:center;font-size:4.8px;color:#5A5A5A;letter-spacing:-0.1px;-webkit-text-stroke-width:0.05px;transform:rotate(-90deg) scaleX(0.85)">5</div><div class="t" style="left:109.4px;top:328.50px;width:40px;height:5px;line-height:5px;text-align:center;font-size:4.8px;color:#5A5A5A;letter-spacing:-0.1px;-webkit-text-stroke-width:0.05px;transform:rotate(-90deg) scaleX(0.85)">6</div><div class="t" style="left:109.4px;top:343.67px;width:40px;height:5px;line-height:5px;text-align:center;font-size:4.8px;color:#5A5A5A;letter-spacing:-0.1px;-webkit-text-stroke-width:0.05px;transform:rotate(-90deg) scaleX(0.85)">7</div><div class="t" style="left:109.4px;top:358.83px;width:40px;height:5px;line-height:5px;text-align:center;font-size:4.8px;color:#5A5A5A;letter-spacing:-0.1px;-webkit-text-stroke-width:0.05px;transform:rotate(-90deg) scaleX(0.85)">8</div><div class="t" style="left:109.4px;top:374.00px;width:40px;height:5px;line-height:5px;text-align:center;font-size:4.8px;color:#5A5A5A;letter-spacing:-0.1px;-webkit-text-stroke-width:0.05px;transform:rotate(-90deg) scaleX(0.85)">9</div><div class="r" style="left:151.3px;top:63px;width:86px;height:57.6px;background:#FFFFFF;box-sizing:border-box;border:0.6px solid #C8C8C8;box-shadow:0.5px 0.5px 1.2px rgba(0,0,0,0.18)"></div><div class="t" style="left:156.4px;top:67.37px;font-size:4.7px;color:#444;font-weight:bold;-webkit-text-stroke-width:0.15px">Gridlines (Shift+F9)</div><div class="t" style="left:156.4px;top:75.60px;font-size:4.83px;color:#575757;font-weight:normal;-webkit-text-stroke-width:0.02px">Show gridlines in the background of</div><div class="t" style="left:156.4px;top:81.50px;font-size:4.83px;color:#575757;font-weight:normal;-webkit-text-stroke-width:0.02px">your document for perfect object</div><div class="t" style="left:156.4px;top:87.80px;font-size:4.83px;color:#575757;font-weight:normal;-webkit-text-stroke-width:0.02px">placement.</div><div class="t" style="left:156.4px;top:99.50px;font-size:4.83px;color:#575757;font-weight:normal;-webkit-text-stroke-width:0.02px">The gridlines make it easy for you to</div><div class="t" style="left:156.4px;top:105.80px;font-size:4.83px;color:#575757;font-weight:normal;-webkit-text-stroke-width:0.02px">align objects with other objects, or a</div><div class="t" style="left:156.4px;top:111.50px;font-size:4.83px;color:#575757;font-weight:normal;-webkit-text-stroke-width:0.02px">particular spot on the page.</div><div class="t" style="left:2.9px;top:410.23px;font-size:4.6px;color:#444;font-weight:normal;-webkit-text-stroke-width:0.1px">Slide 1 of 1</div><div class="t" style="left:45.8px;top:410.23px;font-size:4.6px;color:#444;font-weight:normal;-webkit-text-stroke-width:0.1px">English (United Kingdom)</div><div class="t" style="left:609.4px;top:410.43px;font-size:4.6px;color:#444;font-weight:normal;-webkit-text-stroke-width:0.1px">Notes</div><div class="t" style="left:745px;top:410.48px;font-size:4.35px;color:#444;font-weight:normal;-webkit-text-stroke-width:0.1px">100%</div><div class="r" style="left:629px;top:407.6px;width:15px;height:8.4px;background:#C8C8C8;"></div><svg width="768" height="416" style="left:0;top:0" viewBox="0 0 768 416"><path d="M34 409.8 L37.2 409.8 L37.2 414.6 L34 414.6Z" fill="none" stroke="#8A8A8A" stroke-width="0.5"/><path d="M37.2 410.4 Q39.4 410.8 38.6 412.6 M37.4 413 L38.6 414.6" fill="none" stroke="#8A8A8A" stroke-width="0.5"/><path d="M604.6 409.6 L606.6 411.6 L605 413.2 L603 411.2Z" fill="none" stroke="#8A8A8A" stroke-width="0.55"/><path d="M602.8 415.2 L607.4 415.2 M603.4 413.6 L603.4 415" stroke="#8A8A8A" stroke-width="0.55"/><rect x="633.6" y="409.9" width="6.2" height="4.7" rx="0.5" fill="none" stroke="#8C8C8C" stroke-width="0.55"/><rect x="634.6" y="411" width="2.2" height="1.6" fill="none" stroke="#9A9A9A" stroke-width="0.4"/><rect x="649.2" y="409.8" width="2.3" height="1.8" fill="none" stroke="#888" stroke-width="0.5"/><rect x="652.6" y="409.8" width="2.3" height="1.8" fill="none" stroke="#888" stroke-width="0.5"/><rect x="649.2" y="412.8" width="2.3" height="1.8" fill="none" stroke="#888" stroke-width="0.5"/><rect x="652.6" y="412.8" width="2.3" height="1.8" fill="none" stroke="#888" stroke-width="0.5"/><path d="M664 410 L667 410.6 L670.2 410 L670.2 414.6 L667 415.2 L664 414.6Z M667 410.6 L667 415.2" fill="none" stroke="#888" stroke-width="0.55"/><path d="M679.2 409.8 L685 409.8 M679.8 410.6 L684.4 410.6 L682.1 413 Z M682.1 413 L682.1 415" fill="none" stroke="#888" stroke-width="0.55"/><rect x="692" y="412" width="2.3" height="0.7" fill="#666"/><rect x="696" y="412.05" width="40" height="0.6" fill="#ABABAB"/><rect x="715" y="410" width="2.2" height="4.4" fill="#707070"/><path d="M737.3 412.35 L740.1 412.35 M738.7 410.9 L738.7 413.8" stroke="#666" stroke-width="0.7"/><path d="M761.4 411.2 V409.6 H763 M764.8 409.6 H766.4 V411.2 M766.4 413.4 V415 H764.8 M763 415 H761.4 V413.4" fill="none" stroke="#777" stroke-width="0.55"/><path d="M762.3 410.5 L765.5 414.1 M765.5 410.5 L762.3 414.1" stroke="#999" stroke-width="0.45"/></svg><svg width="768" height="416" style="left:0;top:0" viewBox="0 0 768 416"><path d="M195.6 58.6 L197.8 58.6 L197.8 60.8 M195.6 58.6 L195.6 60.8 L197.8 60.8" fill="none" stroke="#999" stroke-width="0.4"/><path d="M196.2 59.2 L197.6 60.6" stroke="#777" stroke-width="0.4"/><path d="M761.2 60.6 L763 58.9 L764.8 60.6" fill="none" stroke="#555" stroke-width="0.7"/></svg><svg width="768" height="416" style="left:0;top:0" viewBox="0 0 768 416"><rect x="8.9" y="4.1" width="5.6" height="5.4" fill="none" stroke="#FFFFFF" stroke-width="0.9"/><rect x="10.2" y="4.1" width="3" height="1.8" fill="#FFFFFF"/><rect x="10.2" y="7.3" width="3" height="2" fill="#FFFFFF"/><path d="M20.6 5.2 L23.3 5.2 Q25.6 5.2 25.6 7.3 Q25.6 9.3 23.3 9.3 L22.4 9.3" fill="none" stroke="#FFFFFF" stroke-width="0.9"/><path d="M20.2 5.2 L22 3.6 M20.2 5.2 L22 6.8" stroke="#FFFFFF" stroke-width="0.9"/><path d="M28.6 6.2 L30.2 6.2 L29.4 7.1Z" fill="#FFFFFF"/><path d="M35 7.3 Q35 4.8 37.3 4.8 Q39.6 4.8 39.6 7.3 Q39.6 9.6 37.3 9.6 Q35 9.6 35 7.3" fill="none" stroke="rgba(255,255,255,0.22)" stroke-width="0.8"/><rect x="45.8" y="4" width="6.2" height="4.4" fill="none" stroke="#FFFFFF" stroke-width="0.8"/><rect x="47.3" y="5.2" width="3.6" height="2.6" fill="#FFFFFF" opacity="0.7"/><path d="M48.5 8.4 L48.5 10 M47.2 10 L50 10" stroke="#FFFFFF" stroke-width="0.7"/><rect x="57" y="4" width="3" height="3" fill="#FFFFFF" opacity="0.8"/><rect x="58.8" y="5.8" width="3.8" height="3.8" fill="#FFFFFF"/><rect x="61.5" y="8.8" width="1.6" height="1.6" fill="#FFFFFF" opacity="0.7"/><rect x="69.2" y="3.8" width="3" height="3" fill="rgba(255,255,255,0.28)"/><rect x="70.8" y="5.6" width="3.4" height="3.4" fill="rgba(255,255,255,0.28)"/><rect x="73.2" y="8.4" width="1.8" height="1.8" fill="rgba(255,255,255,0.28)"/><circle cx="81.8" cy="5" r="1.3" fill="none" stroke="rgba(255,255,255,0.28)" stroke-width="0.7"/><circle cx="84.6" cy="7.8" r="1.6" fill="none" stroke="rgba(255,255,255,0.28)" stroke-width="0.7"/><circle cx="82.6" cy="6.4" r="0.8" fill="rgba(255,255,255,0.28)"/><rect x="92.6" y="4" width="6.2" height="5.8" fill="none" stroke="rgba(255,255,255,0.28)" stroke-width="0.7" stroke-dasharray="1 1"/><rect x="94.5" y="5.6" width="2.4" height="2.4" fill="rgba(255,255,255,0.28)"/><path d="M104.5 4 L104.5 9.6 L110.2 9.6 L110.2 6 L106.2 6 L106.2 4Z" fill="none" stroke="rgba(255,255,255,0.28)" stroke-width="0.8"/><rect x="106.5" y="7" width="2.4" height="1.6" fill="rgba(255,255,255,0.28)"/><path d="M114.3 9.6 Q118.8 8.6 117.6 4" fill="none" stroke="rgba(255,255,255,0.28)" stroke-width="0.8" stroke-dasharray="0.9 0.7"/><path d="M122.8 6.2 L124.2 6.2 L123.5 7Z" fill="rgba(255,255,255,0.28)"/><path d="M129.4 9.6 L130.6 5 L135.6 4.2 L133.2 8 Z" fill="none" stroke="rgba(255,255,255,0.28)" stroke-width="0.8"/><path d="M141.4 9.8 L146.6 4.4" stroke="rgba(255,255,255,0.28)" stroke-width="1"/><circle cx="146" cy="5" r="0.9" fill="rgba(255,255,255,0.28)"/><path d="M153.8 3.8 L157 7 L153.8 10.2 L150.6 7Z" fill="none" stroke="rgba(255,255,255,0.28)" stroke-width="0.8"/><path d="M159.2 6.2 L160.6 6.2 L159.9 7Z" fill="rgba(255,255,255,0.28)"/><path d="M181.2 9.6 L181.2 7.4 Q182.8 5.8 184.4 7.4 L184.4 9.6Z" fill="none" stroke="rgba(255,255,255,0.28)" stroke-width="0.8"/><circle cx="182.8" cy="4.8" r="1" fill="none" stroke="rgba(255,255,255,0.28)" stroke-width="0.7"/><path d="M192.3 6.2 L196.6 4 L196.6 9.8 L192.3 7.8Z" fill="none" stroke="rgba(255,255,255,0.28)" stroke-width="0.8"/><rect x="204.9" y="5.2" width="2.3" height="3.6" fill="rgba(255,255,255,0.55)"/><rect x="165.4" y="3.9" width="5.2" height="2.6" fill="#FFFFFF" opacity="0.85"/><rect x="166" y="6.8" width="4" height="1.4" fill="#FFFFFF"/><path d="M166.6 8.4 L169.4 8.4 L168 10Z" fill="#FFFFFF" opacity="0.8"/><path d="M173.4 6.2 L175 6.2 L174.2 7.1Z" fill="#FFFFFF"/><rect x="701.3" y="4.2" width="5.8" height="3.8" fill="none" stroke="#F5DDD6" stroke-width="0.7"/><path d="M704.2 4.2 L704.2 8" stroke="#F5DDD6" stroke-width="0.6"/><path d="M720.5 6.1 L724.8 6.1" stroke="#F5DDD6" stroke-width="0.6"/><rect x="739" y="4.2" width="3.6" height="3.6" fill="none" stroke="#F5DDD6" stroke-width="0.6"/><path d="M739.8 4.2 L739.8 3.5 L743.4 3.5 L743.4 7" fill="none" stroke="#F5DDD6" stroke-width="0.5"/><path d="M757.3 3.8 L761.8 8.3 M761.8 3.8 L757.3 8.3" stroke="#F5DDD6" stroke-width="0.6"/><path d="M726.3 18.5 L726.3 22.5 L732 22.5 L732 20.5" fill="none" stroke="#F5DDD6" stroke-width="0.6"/><path d="M728 21 Q728.8 18 732 17.8 M730.8 16.8 L732.4 17.8 L731 19" fill="none" stroke="#F5DDD6" stroke-width="0.6"/><path d="M756.4 17.3 L763 17.3 L763 21.6 L759.3 21.6 L757.4 23.2 L757.4 21.6 L756.4 21.6Z" fill="none" stroke="#F5DDD6" stroke-width="0.6"/><circle cx="287.5" cy="18.6" r="1.9" fill="none" stroke="#F5DDD6" stroke-width="0.6"/><path d="M286.8 20.6 L286.8 22.2 L288.2 22.2 L288.2 20.6" fill="none" stroke="#F5DDD6" stroke-width="0.5"/><rect x="4.3" y="29.3" width="11.7" height="10.8" fill="#FFFFFF" stroke="#A3A3A3" stroke-width="0.6"/><rect x="5" y="29.6" width="10.3" height="0.5" fill="#C9C9C9"/><path d="M9.4 30 L9.4 39.8" stroke="#C4C4C4" stroke-width="0.6"/><rect x="5.2" y="31" width="1.4" height="2.4" fill="#E58A6E"/><rect x="7" y="31" width="1.4" height="2.4" fill="#E58A6E"/><rect x="5.4" y="34.4" width="2.8" height="0.5" fill="#CFCFCF"/><rect x="5.4" y="36.6" width="2.8" height="0.5" fill="#CFCFCF"/><rect x="10.2" y="31.2" width="5" height="0.7" fill="#9A9A9A"/><rect x="10.6" y="32.4" width="4.3" height="2.6" fill="none" stroke="#C4C4C4" stroke-width="0.4"/><rect x="10.2" y="36.3" width="5" height="0.5" fill="#BDBDBD"/><rect x="10" y="37.4" width="5.4" height="2.2" fill="#FFFFFF" stroke="#D0D0D0" stroke-width="0.3"/><rect x="22.1" y="29.3" width="12.3" height="10.8" fill="#FFFFFF" stroke="#A3A3A3" stroke-width="0.6"/><rect x="22.8" y="29.6" width="10.9" height="0.5" fill="#C9C9C9"/><path d="M27.2 30 L27.2 39.8" stroke="#C4C4C4" stroke-width="0.6"/><rect x="23.2" y="31.1" width="2.6" height="0.7" fill="#E58A6E" opacity="0.8"/><path d="M23.2 33 L26 33 M23.2 34.5 L26 34.5 M23.2 36 L26 36" stroke="#D0D0D0" stroke-width="0.4"/><rect x="28" y="31.2" width="5.4" height="0.7" fill="#9A9A9A"/><rect x="28.4" y="32.4" width="4.6" height="2.6" fill="none" stroke="#C4C4C4" stroke-width="0.4"/><rect x="28" y="36.3" width="5.4" height="0.5" fill="#BDBDBD"/><rect x="27.8" y="37.4" width="5.8" height="2.2" fill="#FFFFFF" stroke="#D0D0D0" stroke-width="0.3"/><rect x="39.3" y="29.3" width="12.4" height="10.9" fill="#D9D9D9" stroke="#A3A3A3" stroke-width="0.6"/><rect x="39.7" y="29.7" width="11.6" height="0.8" fill="#FFFFFF"/><rect x="39.7" y="39.2" width="11.6" height="0.7" fill="#FFFFFF"/><rect x="40.4" y="31" width="4.9" height="3.4" fill="#F4F4F4" stroke="#E58A6E" stroke-width="0.6"/><rect x="46" y="31" width="4.7" height="3.4" fill="#EDEDED" stroke="#C2C2C2" stroke-width="0.35"/><rect x="40.4" y="35.3" width="4.9" height="3.2" fill="#EDEDED" stroke="#C2C2C2" stroke-width="0.35"/><rect x="46" y="35.3" width="4.7" height="3.2" fill="#EDEDED" stroke="#C2C2C2" stroke-width="0.35"/><rect x="41.6" y="32" width="2.4" height="1.4" fill="#FFFFFF"/><rect x="41.6" y="36.2" width="2.4" height="1.4" fill="#FFFFFF"/><rect x="47.2" y="36.2" width="2.4" height="1.4" fill="#FFFFFF"/><rect x="56.3" y="29.2" width="12.1" height="11" fill="#FFFFFF" stroke="#A3A3A3" stroke-width="0.6"/><rect x="58" y="29.5" width="8.7" height="10.4" fill="#D9D9D9"/><rect x="59.3" y="32.4" width="6.1" height="1.3" fill="#FFFFFF"/><rect x="59.3" y="35.9" width="6.1" height="1.3" fill="#FFFFFF"/><path d="M74.4 30 L80.3 30.6 L86.2 30 L86.2 39.6 L80.3 40.2 L74.4 39.6Z" fill="#FFFFFF" stroke="#9C9C9C" stroke-width="0.7"/><path d="M80.3 30.6 L80.3 40.2" stroke="#B5B5B5" stroke-width="0.4"/><rect x="74" y="39.4" width="12.6" height="1" fill="#8C8C8C"/><path d="M81.8 34.4 L83.2 32.6 L84.8 34.4Z" fill="#6A6A6A"/><rect x="84.2" y="31.2" width="1" height="1" fill="#E0704F"/><path d="M75.6 32 L78.8 32 M75.6 33.6 L78.8 33.6 M75.6 35.2 L78.8 35.2 M75.6 36.8 L78.8 36.8 M81.6 36 L85 36 M81.6 37.6 L85 37.6" stroke="#D2D2D2" stroke-width="0.45"/><rect x="96.5" y="30.1" width="11.1" height="9.2" fill="#FFFFFF" stroke="#A5A5A5" stroke-width="0.8"/><path d="M98 32.5 L106 32.5 M98.5 34.5 L104.5 34 M98.5 36 L103 35.5" stroke="#BDBDBD" stroke-width="0.5"/><rect x="115.5" y="29.3" width="10.4" height="10.8" fill="#D6D6D6" stroke="#A5A5A5" stroke-width="0.6"/><rect x="116.8" y="30.6" width="3.4" height="2" fill="#FFFFFF"/><rect x="121.2" y="30.6" width="3.4" height="2" fill="#FFFFFF"/><rect x="116.8" y="33.6" width="3.4" height="2" fill="#FFFFFF"/><rect x="121.2" y="33.6" width="3.4" height="2" fill="#FFFFFF"/><rect x="116.8" y="36.6" width="3.4" height="2" fill="#FFFFFF"/><rect x="121.2" y="36.6" width="3.4" height="2" fill="#FFFFFF"/><rect x="134.1" y="29.3" width="10.6" height="10.8" fill="#FFFFFF" stroke="#A5A5A5" stroke-width="0.7"/><path d="M134.1 34.6 L144.7 34.6" stroke="#A5A5A5" stroke-width="0.5"/><rect x="135.6" y="30.6" width="7.6" height="2.8" fill="none" stroke="#AFAFAF" stroke-width="0.4" stroke-dasharray="0.8 0.6"/><rect x="135.6" y="35.8" width="7.6" height="3" fill="none" stroke="#AFAFAF" stroke-width="0.4" stroke-dasharray="0.8 0.6"/><rect x="153.2" y="29" width="4.9" height="4.9" fill="#FFFFFF" stroke="#8E8E8E" stroke-width="0.55"/><rect x="153.2" y="38.4" width="4.9" height="4.9" fill="#FFFFFF" stroke="#8E8E8E" stroke-width="0.55"/><rect x="153.2" y="47.4" width="4.9" height="4.9" fill="#FFFFFF" stroke="#8E8E8E" stroke-width="0.55"/><rect x="153.2" y="38.4" width="4.9" height="4.9" fill="#B5B5B5" stroke="#8E8E8E" stroke-width="0.55"/><path d="M154.0 31.5 L155.3 32.9 L157.5 29.9" fill="none" stroke="#3A3A3A" stroke-width="0.65"/><path d="M154.0 40.9 L155.3 42.3 L157.5 39.3" fill="none" stroke="#3A3A3A" stroke-width="0.65"/><path d="M154.0 49.9 L155.3 51.3 L157.5 48.3" fill="none" stroke="#3A3A3A" stroke-width="0.65"/><rect x="183.5" y="29.1" width="12.3" height="11.2" fill="#FFFFFF" stroke="#A5A5A5" stroke-width="0.6"/><path d="M188.3 29.1 L188.3 40.3" stroke="#A5A5A5" stroke-width="0.5"/><rect x="189.2" y="30.3" width="5.8" height="2.4" fill="#FFFFFF" stroke="#BBB" stroke-width="0.3"/><rect x="189.2" y="33.2" width="5.8" height="4" fill="#D9D9D9"/><rect x="189.2" y="37.8" width="5.8" height="1.8" fill="#A8A8A8"/><path d="M190 34.3 L194 34.3 M190 35.8 L194 35.8" stroke="#B2B2B2" stroke-width="0.4"/><circle cx="208.4" cy="33.4" r="3.8" fill="#FFFFFF" stroke="#707070" stroke-width="0.9"/><path d="M211.2 36.2 L214.9 39.9" stroke="#707070" stroke-width="1.1"/><rect x="222.5" y="29.3" width="11.2" height="10.4" fill="#FFFFFF" stroke="#8A8A8A" stroke-width="0.7"/><rect x="225.6" y="31.5" width="5" height="6" fill="#EFEFEF" stroke="#B0B0B0" stroke-width="0.5"/><path d="M228.1 29.6 L228.1 31 M228.1 38 L228.1 39.4 M222.8 34.5 L225.1 34.5 M231.1 34.5 L233.4 34.5" stroke="#9A9A9A" stroke-width="0.6"/><rect x="243.2" y="28.6" width="5.8" height="5.8" fill="#7E7E7E"/><rect x="243.2" y="28.6" width="5.8" height="1.1" fill="#D95A3A"/><rect x="243.2" y="37.9" width="5.8" height="5.8" fill="#FFFFFF" stroke="#CFCFCF" stroke-width="0.3"/><rect x="243.2" y="40.2" width="5.8" height="1.8" fill="#A0A0A0"/><rect x="243.2" y="42.2" width="5.8" height="1.5" fill="#111"/><rect x="243.2" y="46.9" width="5.8" height="5.8" fill="#FFFFFF" stroke="#CFCFCF" stroke-width="0.3"/><rect x="243.2" y="49.8" width="5.8" height="2.9" fill="#111"/><path d="M248 52.7 L249 51.3 L249 52.7Z" fill="#D95A3A"/><rect x="299.6" y="29.2" width="6.3" height="6" fill="#FFFFFF" stroke="#A5A5A5" stroke-width="0.6"/><rect x="299.6" y="29.2" width="6.3" height="1" fill="#6E6E6E"/><rect x="295.3" y="31.4" width="6.3" height="5" fill="#FFFFFF" stroke="#A5A5A5" stroke-width="0.6"/><rect x="295.3" y="31.4" width="6.3" height="1" fill="#6E6E6E"/><rect x="299.6" y="35.6" width="6.3" height="5.4" fill="#FFFFFF" stroke="#A5A5A5" stroke-width="0.6"/><rect x="299.6" y="35.6" width="6.3" height="1" fill="#6E6E6E"/><rect x="312.4" y="28.8" width="4.8" height="5.4" fill="#FFFFFF" stroke="#A5A5A5" stroke-width="0.6"/><path d="M312.4 31.4 L317.2 31.4" stroke="#A5A5A5" stroke-width="0.5"/><rect x="312.4" y="28.8" width="4.8" height="0.8" fill="#6E6E6E"/><rect x="312.4" y="31.4" width="4.8" height="0.7" fill="#6E6E6E"/><rect x="312.3" y="37.4" width="3.2" height="2.4" fill="#FFFFFF" stroke="#A5A5A5" stroke-width="0.5"/><rect x="313.5" y="38.9" width="3.2" height="2.4" fill="#FFFFFF" stroke="#A5A5A5" stroke-width="0.5"/><rect x="314.8" y="40.6" width="3.4" height="3" fill="#FFFFFF" stroke="#A5A5A5" stroke-width="0.5"/><rect x="314.8" y="40.6" width="3.4" height="0.7" fill="#6E6E6E"/><rect x="312.3" y="47.2" width="5.4" height="5.4" fill="#FFFFFF" stroke="#A5A5A5" stroke-width="0.5"/><rect x="312.3" y="47.2" width="5.4" height="1" fill="#6E6E6E"/><path d="M313.6 50.2 L313.6 51.6 L315 51.6 M316.4 49.6 L316.4 51.2" stroke="#777" stroke-width="0.45" fill="none"/><rect x="356.3" y="29.4" width="5.6" height="5" fill="#FFFFFF" stroke="#A5A5A5" stroke-width="0.5"/><rect x="356.3" y="29.4" width="5.6" height="0.8" fill="#8A8A8A"/><rect x="361.9" y="29.4" width="6" height="4.6" fill="#FFFFFF" stroke="#A5A5A5" stroke-width="0.5"/><rect x="361.9" y="29.4" width="6" height="0.8" fill="#8A8A8A"/><rect x="356.3" y="34.2" width="5" height="5.2" fill="#FFFFFF" stroke="#A5A5A5" stroke-width="0.5"/><rect x="356.3" y="34.2" width="5" height="0.8" fill="#8A8A8A"/><rect x="360.8" y="33" width="5.6" height="5" fill="#FFFFFF" stroke="#A5A5A5" stroke-width="0.5"/><rect x="360.8" y="33" width="5.6" height="0.8" fill="#6E6E6E"/><rect x="380.6" y="29.3" width="10.8" height="9.8" fill="#FFFFFF" stroke="#B0B0B0" stroke-width="0.5"/><rect x="380.6" y="29.3" width="10.8" height="1.4" fill="#707070"/><path d="M384.2 30.7 L384.2 39.1 M387.8 30.7 L387.8 39.1 M380.6 33.4 L391.4 33.4 M380.6 36.2 L391.4 36.2" stroke="#D0D0D0" stroke-width="0.45"/><path d="M387.6 35.2 L392 35.2 L393 34.3 L393 40 L387.6 40Z" fill="#FFFFFF" stroke="#E59A84" stroke-width="0.45"/><path d="M387.6 35.2 L387.6 40 L391.2 40" fill="none" stroke="#D85A38" stroke-width="0.8"/><path d="M392.4 34.4 L392.6 35.6" stroke="#D85A38" stroke-width="0.6"/></svg></div></body></html>
